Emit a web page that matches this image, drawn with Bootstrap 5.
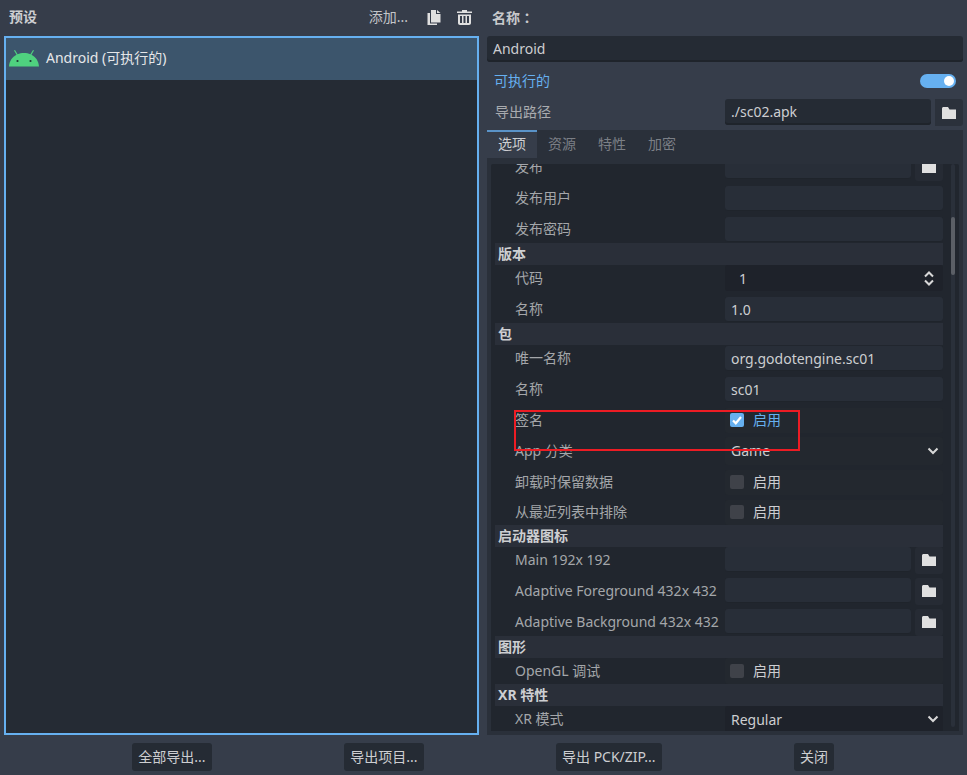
<!DOCTYPE html>
<html lang="zh">
<head>
<meta charset="utf-8">
<title>导出</title>
<link href="https://cdn.jsdelivr.net/npm/bootstrap@5.3.0/dist/css/bootstrap.min.css" rel="stylesheet">
<style>
html,body{height:100%;}
body{background:#363d4a;color:#cdced1;font:14px/20px "Noto Sans","Noto Sans CJK SC",sans-serif;overflow:hidden;}
.shell{width:967px;height:775px;}
.side-l{width:487px;padding:0 8px 0 4px;}
.side-r{width:480px;padding-right:4px;}
.head-l{height:36px;padding:0 5px 2px;}
.tool-add{margin-right:19px;color:#c4c5c8;}
.tool-copy{margin-right:16px;}
.tool-bin{margin-right:2px;}
.tree-box{height:699px;border:2px solid #66b0f0;background:#252b34;}
.tree-sel{height:42px;background:#3c556c;color:#e6e7e9;padding:0 0 2px 3px;gap:7px;}
.foot{height:40px;padding-top:4px;}
.gd-btn{background:#252b34;color:#cdced1;border:0;border-radius:3px;height:28px;padding:0 6px;font:inherit;min-width:80px;}
.foot-l{padding-left:128px;padding-right:55px;}
.foot-r{padding-left:69px;padding-right:129px;}
.foot-r .gd-btn:last-child{min-width:40px;}
.name-lab{height:36px;padding:0 0 2px 5px;font-weight:700;color:#c8c9cc;}
.colon-tc{font-family:"Noto Sans CJK TC",sans-serif;}
.gd-in{background:#252b34;border-radius:3px;box-shadow:inset 0 -2px 0 #1f242b;height:26px;padding:0 6px;color:#cdced1;line-height:25px;}
.exec-row{height:37px;padding:1px 7px 1px 7px;color:#66b0f0;}
.switch{width:36px;height:14px;border-radius:7px;background:#66b0f0;padding:2px;}
.switch i{display:block;width:10px;height:10px;border-radius:50%;background:#fff;}
.path-row{height:31px;}
.path-lab{width:238px;padding-left:8px;color:#a9abaf;line-height:26px;}
.path-in{width:206px;}
.path-btn{width:28px;height:27px;margin-left:4px;background:#2b313b;border-radius:0 3px 3px 0;}
.tabs{height:28px;background:#2a303a;}
.gd-tab{width:50px;text-align:center;color:#7b7f86;line-height:24px;border-top:2px solid transparent;}
.gd-tab-on{background:#363d4a;color:#cdced1;border-top-color:#5a93c8;}
.tab-body{height:577px;background:#2a303a;padding:6px 4px 4px;}
.ins-wrap{height:567px;background:#21262e;position:relative;overflow:hidden;border-radius:2px 2px 0 0;}
.ins-list{padding:0 16px 0 4px;margin-top:-15px;}
.ins-row{height:26px;margin-top:5px;color:#a4a6aa;}
.ins-row.tight{margin-top:0;}
.ins-row.close-up{margin-top:4px;}
.ins-row.tall{height:28px;}
.ins-lab{width:230px;padding-left:20px;white-space:nowrap;flex:none;}
.ins-val{width:218px;flex:none;height:25px;border-radius:3px;padding:0 6px;color:#cdced1;line-height:25px;}
.tall .ins-val{height:28px;}
.v-text{background:#282e38;box-shadow:inset 0 -1px 0 #1f242b;}
.v-dark{background:#1e222a;height:26px;}
.v-chk{background:#23282f;padding-left:5px;gap:9px;}
.v-chk.v-sel{padding:0 4px 0 6px;}
.chk-t{margin-top:-2px;}
.v-path{width:218px;flex:none;}
.v-path-in{width:186px;height:25px;background:#282e38;border-radius:3px;box-shadow:inset 0 -1px 0 #1f242b;}
.v-path-btn{width:28px;height:27px;margin-left:4px;background:#262b34;border-radius:3px;}
.gd-sec{height:22px;margin-top:1px;background:#2a2f39;font-weight:700;color:#cdced1;padding-left:3px;width:448px;line-height:21px;}
.gd-sec.flush{margin-top:0;}
.gd-box{width:14px;height:14px;border-radius:2px;background:#3f4249;flex:none;}
.gd-box-on{background:#66b0f0;}
.lit{color:#66b0f0;}
.spin{margin-right:3px;}
.sel-chev{margin-right:-2px;}
.scroll-tr{position:absolute;right:4px;top:0;bottom:4px;width:4px;background:#2a303a;border-radius:2px;}
.scroll-th{position:absolute;left:0;top:53px;width:4px;height:58px;background:#5b5f66;border-radius:2px;}
.red-mark{position:absolute;left:514px;top:410px;width:286px;height:41px;border:2px solid #ed1c24;pointer-events:none;}
</style>
</head>
<body>
<div class="shell d-flex position-relative">
  <div class="side-l d-flex flex-column">
    <div class="head-l d-flex align-items-center">
      <span class="fw-bold flex-grow-1">预设</span>
      <span class="tool-add">添加...</span>
      <svg class="tool-copy" width="14" height="15" viewBox="0 0 14 15"><path fill="#e0e0e0" d="M4 0h5v4h4.500v8.500H4z"/><path fill="#e0e0e0" d="M10 0l3.500 3H10z"/><path fill="#e0e0e0" d="M.5 3H3v10.500h7V15H.5z"/></svg>
      <svg class="tool-bin" width="15" height="15" viewBox="0 0 15 15"><path fill="#e0e0e0" fill-rule="evenodd" d="M5 0h5v1.500h5V3H0V1.500h5zM1 4.500h13V13c0 1.200-.8 2-2 2H3c-1.200 0-2-.8-2-2zM3 6v7h2V6zm3.500 0v7h2V6zM10 6v7h2V6z"/></svg>
    </div>
    <div class="tree-box">
      <div class="tree-sel d-flex align-items-center">
        <svg width="30" height="18" viewBox="0 0 30 18"><path fill="#4fd17f" d="M0 17.500c.4-5.500 3.300-9.500 7.500-11.700L5 1.500l1-.6 2.600 4.400C10.400 4.500 12.600 4.100 15 4.100s4.600.4 6.400 1.200L24 .9l1 .6-2.500 4.300c4.200 2.200 7.100 6.200 7.500 11.700z"/><circle cx="8.500" cy="12" r="1.100" fill="#1f3a34"/><circle cx="21.500" cy="12" r="1.100" fill="#1f3a34"/></svg>
        <span>Android (可执行的)</span>
      </div>
    </div>
    <div class="foot foot-l d-flex justify-content-between align-items-center"><button class="gd-btn">全部导出...</button><button class="gd-btn">导出项目...</button></div>
  </div>
  <div class="side-r d-flex flex-column">
    <div class="name-lab d-flex align-items-center"><span>名称<span class="colon-tc" lang="zh-Hant-TW">：</span></span></div>
    <div class="gd-in">Android</div>
    <div class="exec-row d-flex align-items-center justify-content-between"><span>可执行的</span><div class="switch d-flex justify-content-end"><i></i></div></div>
    <div class="path-row d-flex align-items-start">
      <div class="path-lab">导出路径</div>
      <div class="gd-in path-in">./sc02.apk</div>
      <div class="path-btn d-flex align-items-center justify-content-center"><svg width="14" height="12" viewBox="0 0 14 12"><path fill="#e0e0e0" d="M0 1.500C0 .7.700 0 1.500 0H6l1.500 2.500H14V12H0z"/></svg></div>
    </div>
    <div class="tabs d-flex">
      <div class="gd-tab gd-tab-on">选项</div><div class="gd-tab">资源</div><div class="gd-tab">特性</div><div class="gd-tab">加密</div>
    </div>
    <div class="tab-body">
      <div class="ins-wrap">
        <div class="ins-list">
          <div class="ins-row d-flex align-items-center"><div class="ins-lab">发布</div><div class="v-path d-flex"><div class="v-path-in"></div><div class="v-path-btn d-flex align-items-center justify-content-center"><svg width="14" height="12" viewBox="0 0 14 12"><path fill="#e0e0e0" d="M0 1.500C0 .7.700 0 1.500 0H6l1.500 2.500H14V12H0z"/></svg></div></div></div>
          <div class="ins-row d-flex align-items-center"><div class="ins-lab">发布用户</div><div class="ins-val v-text"></div></div>
          <div class="ins-row d-flex align-items-center"><div class="ins-lab">发布密码</div><div class="ins-val v-text"></div></div>
          <div class="gd-sec">版本</div>
          <div class="ins-row tight d-flex align-items-center"><div class="ins-lab">代码</div><div class="ins-val v-dark d-flex justify-content-between align-items-center"><span class="ms-2">1</span><svg class="spin" width="10" height="15" viewBox="0 0 10 15"><path fill="none" stroke="#d8d8d8" stroke-width="2" d="M1 5.500l4-4 4 4M1 9.500l4 4 4-4"/></svg></div></div>
          <div class="ins-row d-flex align-items-center"><div class="ins-lab">名称</div><div class="ins-val v-text">1.0</div></div>
          <div class="gd-sec">包</div>
          <div class="ins-row tight d-flex align-items-center"><div class="ins-lab">唯一名称</div><div class="ins-val v-text">org.godotengine.sc01</div></div>
          <div class="ins-row d-flex align-items-center"><div class="ins-lab">名称</div><div class="ins-val v-text">sc01</div></div>
          <div class="ins-row d-flex align-items-center"><div class="ins-lab">签名</div><div class="ins-val v-chk d-flex align-items-center"><svg class="gd-box gd-box-on" viewBox="0 0 14 14"><path fill="none" stroke="#fff" stroke-width="2.200" d="M3 7.500l2.800 2.800L11 4"/></svg><span class="lit chk-t">启用</span></div></div>
          <div class="ins-row tall close-up d-flex align-items-center"><div class="ins-lab">App 分类</div><div class="ins-val v-chk v-sel d-flex align-items-center justify-content-between"><span class="chk-t">Game</span><svg width="12" height="8" viewBox="0 0 12 8"><path fill="none" stroke="#d8d8d8" stroke-width="2" d="M1.500 1.500L6 6l4.500-4.500"/></svg></div></div>
          <div class="ins-row close-up d-flex align-items-center"><div class="ins-lab">卸载时保留数据</div><div class="ins-val v-chk d-flex align-items-center"><span class="gd-box"></span><span class="chk-t">启用</span></div></div>
          <div class="ins-row close-up d-flex align-items-center"><div class="ins-lab">从最近列表中排除</div><div class="ins-val v-chk d-flex align-items-center"><span class="gd-box"></span><span class="chk-t">启用</span></div></div>
          <div class="gd-sec flush">启动器图标</div>
          <div class="ins-row tight d-flex align-items-center"><div class="ins-lab">Main 192x 192</div><div class="v-path d-flex"><div class="v-path-in"></div><div class="v-path-btn d-flex align-items-center justify-content-center"><svg width="14" height="12" viewBox="0 0 14 12"><path fill="#e0e0e0" d="M0 1.500C0 .7.700 0 1.500 0H6l1.500 2.500H14V12H0z"/></svg></div></div></div>
          <div class="ins-row d-flex align-items-center"><div class="ins-lab">Adaptive Foreground 432x 432</div><div class="v-path d-flex"><div class="v-path-in"></div><div class="v-path-btn d-flex align-items-center justify-content-center"><svg width="14" height="12" viewBox="0 0 14 12"><path fill="#e0e0e0" d="M0 1.500C0 .7.700 0 1.500 0H6l1.500 2.500H14V12H0z"/></svg></div></div></div>
          <div class="ins-row d-flex align-items-center"><div class="ins-lab">Adaptive Background 432x 432</div><div class="v-path d-flex"><div class="v-path-in"></div><div class="v-path-btn d-flex align-items-center justify-content-center"><svg width="14" height="12" viewBox="0 0 14 12"><path fill="#e0e0e0" d="M0 1.500C0 .7.700 0 1.500 0H6l1.500 2.500H14V12H0z"/></svg></div></div></div>
          <div class="gd-sec">图形</div>
          <div class="ins-row tight d-flex align-items-center"><div class="ins-lab">OpenGL 调试</div><div class="ins-val v-chk v-dark d-flex align-items-center"><span class="gd-box"></span><span class="chk-t">启用</span></div></div>
          <div class="gd-sec flush">XR 特性</div>
          <div class="ins-row tight d-flex align-items-center"><div class="ins-lab">XR 模式</div><div class="ins-val v-dark d-flex align-items-center justify-content-between"><span>Regular</span><svg class="sel-chev" width="12" height="8" viewBox="0 0 12 8"><path fill="none" stroke="#d8d8d8" stroke-width="2" d="M1.500 1.500L6 6l4.500-4.500"/></svg></div></div>
        </div>
        <div class="scroll-tr"><div class="scroll-th"></div></div>
      </div>
    </div>
    <div class="foot foot-r d-flex justify-content-between align-items-center"><button class="gd-btn">导出 PCK/ZIP...</button><button class="gd-btn">关闭</button></div>
  </div>
  <div class="red-mark"></div>
</div>
<script src="https://cdn.jsdelivr.net/npm/bootstrap@5.3.0/dist/js/bootstrap.bundle.min.js"></script>
</body>
</html>
